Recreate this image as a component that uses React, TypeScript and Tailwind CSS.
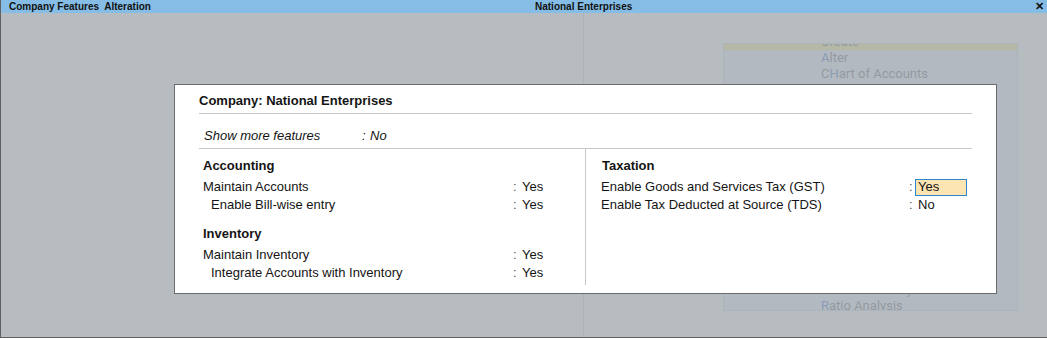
const LEFT_ACCOUNTING = [
  { label: "Maintain Accounts", value: "Yes", indent: false },
  { label: "Enable Bill-wise entry", value: "Yes", indent: true },
];

const LEFT_INVENTORY = [
  { label: "Maintain Inventory", value: "Yes", indent: false },
  { label: "Integrate Accounts with Inventory", value: "Yes", indent: true },
];

function Row({ label, value, indent }: { label: string; value: string; indent: boolean }) {
  return (
    <div className="flex h-[18px] items-center">
      <div className={`w-[310px] ${indent ? "pl-[8px]" : ""}`}>{label}</div>
      <span className="w-[9px] text-[#555]">:</span>
      <span>{value}</span>
    </div>
  );
}

function MenuItem({ text, hot, highlight }: { text: string; hot: number; highlight?: boolean }) {
  return (
    <div className={`h-[16px] whitespace-pre pl-[97px] leading-[16px] ${highlight ? "bg-[#b5b8a4]" : ""}`}>
      {text.slice(0, hot)}
      <span className="text-[#8b9db4]">{text.charAt(hot)}</span>
      {text.slice(hot + 1)}
    </div>
  );
}

export default function App() {
  return (
    <div className="relative flex h-[338px] w-[1047px] flex-col overflow-hidden border-b border-l border-[#5f6163] bg-[#b7bcc0] font-['Liberation_Sans',Arial,sans-serif] text-[13px] text-[#141414]">
      {/* title bar */}
      <div className="flex h-[13px] flex-none items-center bg-[#85bde6] pl-[8px] pr-[3px] text-[10px] font-bold leading-none text-[#111]">
        <span className="w-[526px] whitespace-pre">Company Features  Alteration</span>
        <span>National Enterprises</span>
        <span className="ml-auto text-[11px]">✕</span>
      </div>

      {/* background gateway */}
      <div className="flex flex-1">
        <div className="w-[583px] border-r border-[#adb2b6]" />
        <div className="pl-[139px] pt-[30px]">
          <div className="flex h-[268px] w-[295px] flex-col overflow-hidden border border-[#acb3ba] bg-[#b3b9c0] font-['Roboto',sans-serif] text-[13px] text-[#939aa2]">
            <div className="-mt-[10px]">
              <MenuItem text="Create" hot={1} highlight />
              <MenuItem text="Alter" hot={0} />
              <MenuItem text="CHart of Accounts" hot={1} />
            </div>
            <div className="flex-1" />
            <div className="-mb-[4px]">
              <MenuItem text="Stock Summary" hot={0} />
              <MenuItem text="Ratio Analysis" hot={0} />
            </div>
          </div>
        </div>
      </div>

      {/* feature dialog */}
      <div className="absolute left-[173px] top-[84px] flex h-[210px] w-[823px] flex-col border border-[#6b6b6b] bg-white">
        <div className="mx-[24px] h-[29px] border-b border-[#c8c8c8] pt-[8px] font-bold leading-[16px]">
          Company: National Enterprises
        </div>
        <div className="mx-[24px] flex h-[35px] border-b border-[#c8c8c8] pl-[5px] pt-[14px] italic leading-[16px]">
          <span className="w-[158px]">Show more features</span>
          <span className="w-[8px]">:</span>
          <span>No</span>
        </div>
        <div className="flex h-[136px] leading-[16px]">
          <div className="w-[411px] border-r border-[#c8c8c8] pl-[28px] pt-[9px]">
            <div className="mb-[4px] h-[16px] font-bold">Accounting</div>
            {LEFT_ACCOUNTING.map((r) => (
              <Row key={r.label} {...r} />
            ))}
            <div className="mb-[4px] mt-[12px] h-[16px] font-bold">Inventory</div>
            {LEFT_INVENTORY.map((r) => (
              <Row key={r.label} {...r} />
            ))}
          </div>
          <div className="flex-1 pl-[15px] pt-[9px]">
            <div className="mb-[4px] h-[16px] pl-[1px] font-bold">Taxation</div>
            <div className="flex h-[18px] items-center">
              <div className="w-[308px]">Enable Goods and Services Tax (GST)</div>
              <span className="w-[6px] text-[#555]">:</span>
              <span className="flex h-[17px] w-[52px] items-center border border-[#2a86c8] bg-[#fde4b3] pl-[2px]">Yes</span>
            </div>
            <div className="flex h-[18px] items-center">
              <div className="w-[308px]">Enable Tax Deducted at Source (TDS)</div>
              <span className="w-[9px] text-[#555]">:</span>
              <span>No</span>
            </div>
          </div>
        </div>
      </div>
    </div>
  );
}
